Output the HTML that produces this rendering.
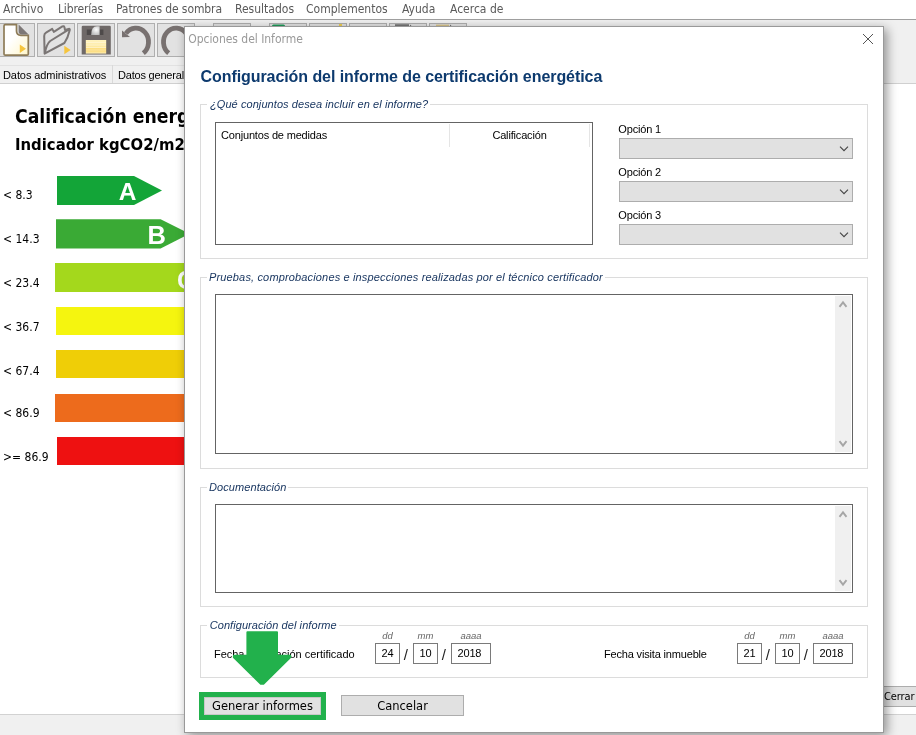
<!DOCTYPE html>
<html lang="es">
<head>
<meta charset="utf-8">
<title>Opciones del Informe</title>
<style>
*{box-sizing:border-box;margin:0;padding:0}
html,body{width:916px;height:735px;overflow:hidden;background:#fff}
body{position:relative;font-family:"Liberation Sans","DejaVu Sans",sans-serif;font-size:11px;color:#000}
.abs{position:absolute}
#root{position:absolute;left:0;top:0;width:916px;height:735px;overflow:hidden;will-change:transform}
/* main window */
#menubar{position:absolute;left:0;top:0;width:916px;height:19px;background:#fff}
#menubar span{position:absolute;top:0px;font-family:"DejaVu Sans","Liberation Sans",sans-serif;font-stretch:condensed;font-size:12px;color:#5a5a5a;white-space:nowrap;line-height:18px}
#tbline{position:absolute;left:0;top:19px;width:916px;height:1px;background:#a0a0a0}
#toolbar{position:absolute;left:0;top:20px;width:916px;height:63px;background:#f0f0f0}
#tabline{position:absolute;left:0;top:83px;width:916px;height:1px;background:#d0d0d0}
.tb{position:absolute;top:23px;width:38px;height:34px;background:#e2e2e2;border:1px solid #afafaf}
.tab{position:absolute;top:67px;height:17px;font-size:11px;line-height:17px;white-space:nowrap;color:#000;letter-spacing:-0.09px}
#status{position:absolute;left:0;top:714px;width:916px;height:21px;background:#f0f0f0;border-top:1px solid #d2d2d2}
.h1{position:absolute;left:15px;top:105px;font-family:"DejaVu Sans","Liberation Sans",sans-serif;font-stretch:condensed;font-weight:bold;font-size:19.2px;white-space:nowrap;line-height:24px}
.h2{position:absolute;left:15px;top:134px;font-family:"DejaVu Sans","Liberation Sans",sans-serif;font-stretch:condensed;font-weight:bold;font-size:16.55px;white-space:nowrap;line-height:22px}
.lbl{position:absolute;left:3px;font-family:"DejaVu Sans","Liberation Sans",sans-serif;font-stretch:condensed;font-size:12px;white-space:nowrap;line-height:16px}
/* dialog */
#dlg{position:absolute;left:184px;top:26px;width:700px;height:707px;background:#fff;border:1px solid #999;box-shadow:3px 3px 10px 0 rgba(0,0,0,.4);overflow:hidden}
#dlg .t{position:absolute;white-space:nowrap;letter-spacing:-0.17px}
#dc{position:absolute;left:-185px;top:-27px;width:916px;height:735px}
.gb{position:absolute;border:1px solid #dcdcdc}
.gl{position:absolute;background:#fff;font-style:italic;color:#1a3761;font-size:11px;line-height:14px;white-space:nowrap;padding:0 2px 0 3px}
.box{position:absolute;border:1px solid #646464;background:#fff}
.cb{position:absolute;left:434px;width:234px;height:21px;background:#e1e1e1;border:1px solid #adadad}
.fld{letter-spacing:-0.17px;position:absolute;border:1px solid #7a7a7a;background:#fff;height:21px;font-size:11px;line-height:19px;text-align:left;padding-left:5.5px}
.sm{position:absolute;font-style:italic;color:#666;font-size:9.5px;line-height:12px;white-space:nowrap}
.btn{position:absolute;background:#e1e1e1;border:1px solid #adadad;text-align:center;font-family:"DejaVu Sans","Liberation Sans",sans-serif;font-size:11.5px;line-height:19px;white-space:nowrap}
.sb{position:absolute;right:1px;top:1px;bottom:1px;width:16px;background:#f0f0f0}
</style>
</head>
<body>
<div id="root">
<div id="menubar">
<span style="left:3px">Archivo</span><span style="left:58px;letter-spacing:-0.15px">Librerías</span><span style="left:116px;letter-spacing:-0.1px">Patrones de sombra</span><span style="left:235px">Resultados</span><span style="left:306px">Complementos</span><span style="left:402px">Ayuda</span><span style="left:450px">Acerca de</span>
</div>
<div id="tbline"></div>
<div id="toolbar"></div>
<div id="tabline"></div>
<div class="abs" style="left:0;top:65px;width:600px;height:1px;background:#e2e2e2"></div>
<div id="status"></div>
<div class="tb" style="left:-3px"></div>
<div class="tb" style="left:37px"></div>
<div class="tb" style="left:77px"></div>
<div class="tb" style="left:117px"></div>
<div class="tb" style="left:157px"></div>
<div class="tb" style="left:213px"></div>
<div class="tb" style="left:269px"></div>
<div class="tb" style="left:309px"></div>
<div class="tb" style="left:349px"></div>
<div class="tb" style="left:389px"></div>
<div class="tb" style="left:429px"></div>
<svg class="abs" style="left:0;top:20px" width="480" height="40" viewBox="0 20 480 40">
<defs>
<linearGradient id="pg" x1="0" y1="0" x2="1" y2="1"><stop offset="0.4" stop-color="#fff"/><stop offset="1" stop-color="#fff6c8"/></linearGradient>
<linearGradient id="lb" x1="0" y1="0" x2="0" y2="1"><stop offset="0" stop-color="#fff3c0"/><stop offset="0.5" stop-color="#fde9a0"/><stop offset="0.75" stop-color="#fbd465"/><stop offset="1" stop-color="#fff0b8"/></linearGradient>
<radialGradient id="sh" cx="0.6" cy="0.4" r="0.7"><stop offset="0" stop-color="#fff"/><stop offset="1" stop-color="#b5b5b5"/></radialGradient>
</defs>
<!-- new -->
<path d="M5.2 24.7 H16.5 V31 Q16.5 35.3 21 35.3 H28.3 V54 Q28.3 55.2 27.1 55.2 H5.2 Q4 55.2 4 54 V25.9 Q4 24.7 5.2 24.7 Z" fill="url(#pg)" stroke="#8e7c58" stroke-width="1.7"/>
<path d="M18.6 24.6 L28.6 34.4 H21.5 Q18.6 34.4 18.6 31 Z" fill="#7d7877"/>
<path d="M19.8 44.5 L26 48.7 L19.8 52.9 Z" fill="#f6c53d"/>
<!-- open -->
<path d="M44.6 53.6 L44.2 36 Q44.2 33.6 46 32.6 L52.2 28.9 L53.8 31.9 L62.4 26.4 Q64 25.6 64.5 27.4 L65 30 L68.6 28.9 Q70.2 28.6 69.7 30.2 Q68 37.5 64.4 43 Z M44.8 53.4 Q46.5 44 50.2 41 L69 29.4" fill="none" stroke="#7b7675" stroke-width="2" stroke-linejoin="round" stroke-linecap="round"/>
<path d="M64.3 45.8 L70.6 50 L64.3 54.2 Z" fill="#f6c53d"/>
<!-- save -->
<path d="M83 25.7 H109.5 Q110.8 25.7 110.8 27 V54.5 H81.7 V27 Q81.7 25.7 83 25.7 Z" fill="#6f6968"/>
<rect x="86.8" y="29.5" width="16.6" height="5.5" fill="#4e4a4a"/>
<path d="M91.2 35 Q91 26.2 97 26.2 H99.6 V35 Z" fill="url(#sh)"/>
<rect x="85.8" y="40" width="20.4" height="13.6" fill="url(#lb)"/>
<path d="M86 42.5 H106 M86 45 H106 M86 47.5 H106 M86 50 H106" stroke="#fff8dc" stroke-width="0.8" opacity="0.8"/>
<!-- undo -->
<path d="M125.9 33.5 A12.6 13.9 0 1 1 143.3 53.2" fill="none" stroke="#787170" stroke-width="4.8"/>
<path d="M122 30.4 L122 37.2 L130 37 Z" fill="#787170"/>
<!-- redo -->
<path d="M186.1 33.5 A12.6 13.9 0 1 0 168.7 53.2" fill="none" stroke="#787170" stroke-width="4.8"/>
<!-- partial icons above dialog -->
<rect x="272" y="24.6" width="13" height="4" rx="1.5" fill="#1f9b5a"/>
<rect x="339" y="24" width="3" height="4" fill="#f0d050"/>
<rect x="395" y="24.2" width="14" height="4" fill="#777"/><path d="M410 24.5 L412.5 27 H410 Z" fill="#666"/>
<rect x="436" y="24.6" width="13" height="4" fill="#d9c48a"/><path d="M450 24.5 L452.5 27 H450 Z" fill="#666"/>
</svg>
<div class="tab" style="left:3px">Datos administrativos</div>
<div class="abs" style="left:112px;top:65px;width:1px;height:18px;background:#d9d9d9"></div>
<div class="tab" style="left:118px;letter-spacing:-0.2px">Datos generales</div>
<div class="h1">Calificación energética</div>
<div class="h2">Indicador kgCO2/m2 año</div>
<div class="lbl" style="top:187px">&lt; 8.3</div>
<div class="lbl" style="top:231px">&lt; 14.3</div>
<div class="lbl" style="top:275px">&lt; 23.4</div>
<div class="lbl" style="top:319px">&lt; 36.7</div>
<div class="lbl" style="top:363px">&lt; 67.4</div>
<div class="lbl" style="top:405px">&lt; 86.9</div>
<div class="lbl" style="top:449px">&gt;= 86.9</div>
<svg class="abs" style="left:0;top:170px" width="200" height="300" viewBox="0 170 200 300">
<polygon points="57,176 134,176 162,190.5 134,205 57,205" fill="#13a538"/>
<polygon points="56,219.2 160.6,219.2 189.6,233.8 160.6,248.4 56,248.4" fill="#3aaa35"/>
<rect x="55" y="263" width="140" height="29" fill="#a4d81c"/>
<rect x="56" y="307" width="140" height="28" fill="#f5f50f"/>
<rect x="56" y="350" width="140" height="28" fill="#efce07"/>
<rect x="55" y="394" width="140" height="28" fill="#ed6b1c"/>
<rect x="57" y="437" width="140" height="28" fill="#ee1111"/>
<text x="127.7" y="199.7" font-family="Liberation Sans,sans-serif" font-weight="bold" font-size="24.5" fill="#fff" text-anchor="middle">A</text>
<text x="156.7" y="243.8" font-family="Liberation Sans,sans-serif" font-weight="bold" font-size="25.5" fill="#fff" text-anchor="middle">B</text>
<text x="186" y="288.5" font-family="Liberation Sans,sans-serif" font-weight="bold" font-size="25" fill="#fff" text-anchor="middle">C</text>
</svg>
<div class="btn" style="left:880px;top:686px;width:50px;height:21px;text-align:left;padding-left:3px;font-stretch:condensed;font-size:11px;letter-spacing:-0.1px;line-height:20px">Cerrar</div>

<div id="dlg">
<div class="t" style="left:3.2px;top:4px;font-family:'DejaVu Sans','Liberation Sans',sans-serif;font-stretch:condensed;font-size:12px;color:#999;line-height:16px;letter-spacing:-0.03px">Opciones del Informe</div>
<svg class="abs" style="left:676px;top:5px" width="14" height="14" viewBox="0 0 14 14"><path d="M2 2 L12 12 M12 2 L2 12" stroke="#555" stroke-width="1" fill="none"/></svg>
<div class="t" style="left:15.5px;top:40px;font-weight:bold;font-size:16px;color:#0d3a6e;line-height:20px;letter-spacing:-0.07px">Configuración del informe de certificación energética</div>
<div id="dc">
<div class="gb" style="left:200px;top:104px;width:668px;height:155px"></div>
<div class="gl" style="left:207px;padding-left:3px;top:97px;letter-spacing:0.07px">¿Qué conjuntos desea incluir en el informe?</div>
<div class="box" style="left:215px;top:122px;width:378px;height:123px">
<div class="abs" style="left:233px;top:1px;width:1px;height:23px;background:#e5e5e5"></div>
<div class="abs" style="left:373px;top:1px;width:1px;height:23px;background:#e5e5e5"></div>
<div class="t" style="left:5px;top:5px;line-height:14px">Conjuntos de medidas</div>
<div class="t" style="left:234px;width:139px;text-align:center;top:5px;line-height:14px">Calificación</div>
</div>
<div class="t" style="left:618.3px;top:122px;line-height:14px">Opción 1</div>
<div class="cb" style="left:619px;top:138px"><svg class="abs" style="right:3px;top:7px" width="10" height="6" viewBox="0 0 10 6"><path d="M1 0.7 L5 4.7 L9 0.7" fill="none" stroke="#444" stroke-width="1.1"/></svg></div>
<div class="t" style="left:618.3px;top:165px;line-height:14px">Opción 2</div>
<div class="cb" style="left:619px;top:181px"><svg class="abs" style="right:3px;top:7px" width="10" height="6" viewBox="0 0 10 6"><path d="M1 0.7 L5 4.7 L9 0.7" fill="none" stroke="#444" stroke-width="1.1"/></svg></div>
<div class="t" style="left:618.3px;top:208px;line-height:14px">Opción 3</div>
<div class="cb" style="left:619px;top:224px"><svg class="abs" style="right:3px;top:7px" width="10" height="6" viewBox="0 0 10 6"><path d="M1 0.7 L5 4.7 L9 0.7" fill="none" stroke="#444" stroke-width="1.1"/></svg></div>

<div class="gb" style="left:200px;top:277px;width:668px;height:192px"></div>
<div class="gl" style="left:207px;padding-left:2px;top:270px;letter-spacing:0.153px">Pruebas, comprobaciones e inspecciones realizadas por el técnico certificador</div>
<div class="box" style="left:215px;top:294px;width:638px;height:160px"><div class="sb"><svg class="abs" style="left:2.5px;top:4.2px" width="10" height="8" viewBox="0 0 10 8"><path d="M1.5 6.8 L5 2.4 L8.5 6.8" fill="none" stroke="#a6a6a6" stroke-width="1.9"/></svg><svg class="abs" style="left:2.5px;bottom:4.2px" width="10" height="8" viewBox="0 0 10 8"><path d="M1.5 1.2 L5 5.6 L8.5 1.2" fill="none" stroke="#a6a6a6" stroke-width="1.9"/></svg></div></div>

<div class="gb" style="left:200px;top:487px;width:668px;height:120px"></div>
<div class="gl" style="left:207px;padding-left:2px;top:480px;letter-spacing:0.08px">Documentación</div>
<div class="box" style="left:215px;top:504px;width:638px;height:89px"><div class="sb"><svg class="abs" style="left:2.5px;top:4.2px" width="10" height="8" viewBox="0 0 10 8"><path d="M1.5 6.8 L5 2.4 L8.5 6.8" fill="none" stroke="#a6a6a6" stroke-width="1.9"/></svg><svg class="abs" style="left:2.5px;bottom:4.2px" width="10" height="8" viewBox="0 0 10 8"><path d="M1.5 1.2 L5 5.6 L8.5 1.2" fill="none" stroke="#a6a6a6" stroke-width="1.9"/></svg></div></div>

<div class="gb" style="left:200px;top:625px;width:668px;height:53px"></div>
<div class="gl" style="left:207px;padding-left:2.7px;top:618px;letter-spacing:0.07px">Configuración del informe</div>
<div class="t" style="left:214px;top:647px;line-height:14px;letter-spacing:-0.02px">Fecha finalización certificado</div>
<div class="sm" style="left:375px;width:25px;text-align:center;top:630px">dd</div>
<div class="sm" style="left:413px;width:25px;text-align:center;top:630px">mm</div>
<div class="sm" style="left:451px;width:40px;text-align:center;top:630px">aaaa</div>
<div class="fld" style="left:375px;top:643px;width:25px">24</div>
<div class="t" style="left:403.7px;top:648px;line-height:14px;font-size:15px;color:#222">/</div>
<div class="fld" style="left:413px;top:643px;width:25px">10</div>
<div class="t" style="left:441.7px;top:648px;line-height:14px;font-size:15px;color:#222">/</div>
<div class="fld" style="left:451px;top:643px;width:40px">2018</div>

<div class="t" style="left:604px;top:647px;line-height:14px">Fecha visita inmueble</div>
<div class="sm" style="left:737px;width:25px;text-align:center;top:630px">dd</div>
<div class="sm" style="left:775px;width:25px;text-align:center;top:630px">mm</div>
<div class="sm" style="left:813px;width:40px;text-align:center;top:630px">aaaa</div>
<div class="fld" style="left:737px;top:643px;width:25px">21</div>
<div class="t" style="left:765.7px;top:648px;line-height:14px;font-size:15px;color:#222">/</div>
<div class="fld" style="left:775px;top:643px;width:25px">10</div>
<div class="t" style="left:803.7px;top:648px;line-height:14px;font-size:15px;color:#222">/</div>
<div class="fld" style="left:813px;top:643px;width:40px">2018</div>

<div class="abs" style="left:199px;top:692px;width:127px;height:28px;background:#22b14c"></div>
<div class="btn" style="left:204px;top:697px;width:117px;height:18px;line-height:16px;border-color:#c8c8c8">Generar informes</div>
<div class="btn" style="left:341px;top:695px;width:123px;height:21px;line-height:21px">Cancelar</div>
<svg class="abs" style="left:225px;top:628px" width="74" height="60" viewBox="225 628 74 60"><path d="M247.4 632.3 H277 V655.8 H290.2 V657.2 L263.4 683.8 H260.8 L233.9 657.2 V655.8 H247.4 Z" fill="#22b14c" stroke="#22b14c" stroke-width="2" stroke-linejoin="round"/></svg>
</div>
</div>
</div>
</body>
</html>
